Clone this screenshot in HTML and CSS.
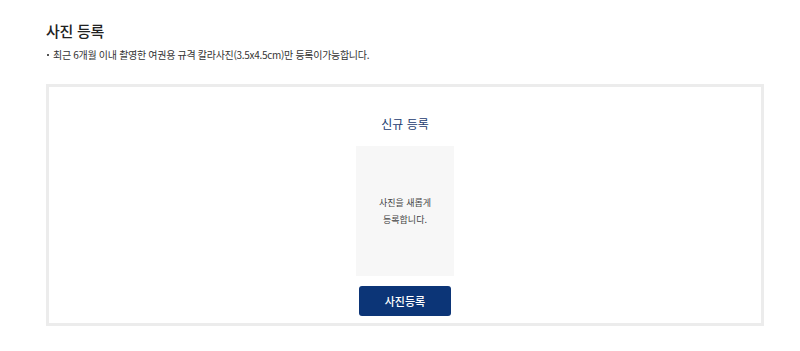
FILE: index.html
```html
<!DOCTYPE html>
<html lang="ko">
<head>
<meta charset="utf-8">
<title>사진 등록</title>
<link rel="stylesheet" href="styles.css">
</head>
<body>
<section class="photo-section">
  <h2 class="title">사진 등록</h2>
  <ul class="notes">
    <li>최근 6개월 이내 촬영한 여권용 규격 칼라사진(3.5x4.5cm)만 등록이가능합니다.</li>
  </ul>
  <div class="box">
    <h3 class="sub">신규 등록</h3>
    <div class="photo">
      <p>사진을 새롭게<br>등록합니다.</p>
    </div>
    <button class="btn" type="button">사진등록</button>
  </div>
</section>
</body>
</html>
```
FILE: styles.css
```css
* { box-sizing: border-box; }
html, body { margin: 0; padding: 0; background: #fff; }
body {
  font-family: "Noto Sans CJK KR", "Noto Sans", sans-serif;
  color: #222;
}
.photo-section {
  padding: 20px 35px 0 46px;
}
.title {
  margin: 0;
  font-size: 15px;
  font-weight: 500;
  line-height: 22px;
  color: #222;
  letter-spacing: -0.3px;
}
.notes {
  list-style: none;
  margin: 5px 0 0;
  padding: 0;
}
.notes li {
  position: relative;
  padding-left: 7px;
  font-size: 10px;
  line-height: 16px;
  color: #333;
  letter-spacing: -0.3px;
}
.notes li::before {
  content: "";
  position: absolute;
  left: 1px;
  top: 7px;
  width: 2px;
  height: 2px;
  background: #555;
}
.box {
  margin-top: 21px;
  width: 718px;
  height: 242px;
  border: 3px solid #ececec;
  display: flex;
  flex-direction: column;
  align-items: center;
}
.sub {
  margin: 29px 0 0;
  font-size: 12px;
  font-weight: 400;
  line-height: 16px;
  color: #1b3b6f;
}
.photo {
  margin-top: 14px;
  width: 98px;
  height: 130px;
  background: #f7f7f7;
  display: flex;
  align-items: center;
  justify-content: center;
}
.photo p {
  margin: 0;
  font-size: 9px;
  line-height: 17px;
  color: #444;
  text-align: center;
}
.btn {
  margin-top: 10px;
  width: 92px;
  height: 30px;
  border: 0;
  border-radius: 3px;
  background: #0c3577;
  color: #fff;
  font-family: inherit;
  font-size: 11px;
  font-weight: 500;
  padding: 0;
}
```
